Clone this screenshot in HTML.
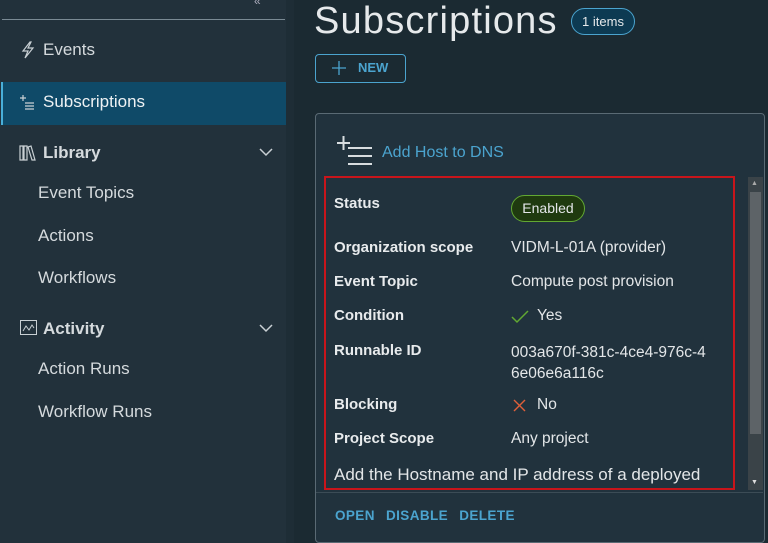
<!DOCTYPE html><html><head><style>
body{margin:0;width:768px;height:543px;background:#1b2a32;font-family:"Liberation Sans",sans-serif;overflow:hidden;position:relative;color:#e3e6e8}
.side{position:absolute;left:0;top:0;width:286px;height:543px;background:#22313b}
.strip{position:absolute;left:286px;top:0;width:8px;height:543px;background:#1e2d36}
.a{position:absolute;white-space:nowrap}
.nav{font-size:17px;color:#d5dadd}
.b{font-weight:bold}
.lab{position:absolute;left:334px;font-size:15px;font-weight:bold;color:#e8ebed}
.val{position:absolute;left:511px;font-size:15.5px;color:#e3e6e8}
</style></head><body>
<div class="side"></div><div class="strip"></div>
<div class="a" style="left:2px;top:19px;width:283px;height:1px;background:#7a8a94"></div>
<div class="a" style="left:254px;top:-6px;color:#aab;font-size:12px">«</div>
<svg class="a" style="left:20px;top:41px" width="16" height="18" viewBox="0 0 16 18"><path d="M10 1 L3 10 H8 L5 17 L13 7 H8 L11 1Z" fill="none" stroke="#c9d0d4" stroke-width="1.2"/></svg>
<div class="a nav" style="left:43px;top:40px">Events</div>
<div class="a" style="left:2px;top:82px;width:284px;height:43px;background:#0f4a68"></div>
<div class="a" style="left:1px;top:82px;width:2px;height:43px;background:#49afd9"></div>
<svg class="a" style="left:19px;top:94px" width="18" height="18" viewBox="0 0 18 18"><path d="M1 4H7M4 1V7M6 9H15M6 12H15M6 15H15" stroke="#c9d0d4" stroke-width="1.2"/></svg>
<div class="a nav" style="left:43px;top:92px;color:#eef2f4">Subscriptions</div>
<svg class="a" style="left:19px;top:144px" width="20" height="18" viewBox="0 0 20 18"><path d="M1 2V16H4V2ZM5 2V16H8V2ZM9 3L13 16H16L12 2Z" fill="none" stroke="#c9d0d4" stroke-width="1.2"/></svg>
<div class="a nav b" style="left:43px;top:143px">Library</div>
<svg class="a" style="left:259px;top:148px" width="14" height="9"><path d="M1 1L7 7L13 1" fill="none" stroke="#c9d0d4" stroke-width="1.5"/></svg>
<div class="a nav" style="left:38px;top:183px">Event Topics</div>
<div class="a nav" style="left:38px;top:226px">Actions</div>
<div class="a nav" style="left:38px;top:268px">Workflows</div>
<svg class="a" style="left:20px;top:320px" width="18" height="16"><rect x="0.5" y="0.5" width="16" height="14" fill="none" stroke="#c9d0d4"/><path d="M3 11L6 6L9 10L12 5L14 8" fill="none" stroke="#c9d0d4"/></svg>
<div class="a nav b" style="left:43px;top:319px">Activity</div>
<svg class="a" style="left:259px;top:324px" width="14" height="9"><path d="M1 1L7 7L13 1" fill="none" stroke="#c9d0d4" stroke-width="1.5"/></svg>
<div class="a nav" style="left:38px;top:359px">Action Runs</div>
<div class="a nav" style="left:38px;top:402px">Workflow Runs</div>

<div class="a" style="left:314px;top:0px;font-size:38px;color:#e6e9eb;letter-spacing:1.2px">Subscriptions</div>
<div class="a" style="left:571px;top:8px;width:62px;height:25px;border:1.5px solid #4ba4cf;border-radius:14px;background:#0d3a52;font-size:13px;text-align:center;line-height:25px;color:#e6e9eb">1 items</div>
<div class="a" style="left:315px;top:54px;width:89px;height:27px;border:1.5px solid #4ba4cf;border-radius:4px"></div>
<svg class="a" style="left:331px;top:60px" width="16" height="16"><path d="M8 1V15M1 8H15" stroke="#4ba4cf" stroke-width="1.3"/></svg>
<div class="a" style="left:358px;top:60px;font-size:13px;font-weight:bold;color:#4ba4cf">NEW</div>

<div class="a" style="left:315px;top:113px;width:448px;height:428px;border:1px solid #5a6a74;border-radius:4px;background:#21323d"></div>
<svg class="a" style="left:336px;top:134px" width="38" height="34"><path d="M1 9H14M7.5 2V16M12 14H36M12 22H36M12 30H36" stroke="#d8dde0" stroke-width="2"/></svg>
<div class="a" style="left:382px;top:144px;font-size:16px;color:#4ba4cf">Add Host to DNS</div>
<div class="a" style="left:324px;top:176px;width:407px;height:310px;border:2.5px solid #c8151b"></div>
<div class="a" style="left:748px;top:177px;width:15px;height:313px;background:#3a4348"></div>
<div class="a" style="left:750px;top:192px;width:11px;height:242px;background:#5d6367"></div>
<div class="a" style="left:751px;top:180px;font-size:7px;color:#aaa">▲</div>
<div class="a" style="left:751px;top:479px;font-size:7px;color:#ddd">▼</div>
<div class="lab" style="top:195px">Status</div>
<div class="a" style="left:511px;top:195px;width:72px;height:25px;border:1.5px solid #62a832;border-radius:14px;background:#1f3a0f;font-size:14px;text-align:center;line-height:25px">Enabled</div>
<div class="lab" style="top:239px">Organization scope</div><div class="val" style="top:239px">VIDM-L-01A (provider)</div>
<div class="lab" style="top:273px">Event Topic</div><div class="val" style="top:273px">Compute post provision</div>
<div class="lab" style="top:307px">Condition</div>
<svg class="a" style="left:511px;top:310px" width="18" height="14"><path d="M1 7L6 12L17 1" fill="none" stroke="#62a832" stroke-width="1.5"/></svg>
<div class="val" style="top:307px;left:537px">Yes</div>
<div class="lab" style="top:342px">Runnable ID</div><div class="val" style="top:342px;line-height:21px">003a670f-381c-4ce4-976c-4<br>6e06e6a116c</div>
<div class="lab" style="top:396px">Blocking</div>
<svg class="a" style="left:513px;top:399px" width="13" height="13"><path d="M1 1L12 12M12 1L1 12" stroke="#e0603a" stroke-width="1.4"/></svg>
<div class="val" style="top:396px;left:537px">No</div>
<div class="lab" style="top:430px">Project Scope</div><div class="val" style="top:430px">Any project</div>
<div class="a" style="left:334px;top:465px;font-size:17px;color:#e3e6e8">Add the Hostname and IP address of a deployed</div>
<div class="a" style="left:316px;top:492px;width:447px;height:1px;background:#3c4c56"></div>
<div class="a" style="left:335px;top:508px;font-size:13.5px;font-weight:bold;color:#4ba4cf;letter-spacing:0.4px;word-spacing:7px">OPEN DISABLE DELETE</div>
</body></html>
